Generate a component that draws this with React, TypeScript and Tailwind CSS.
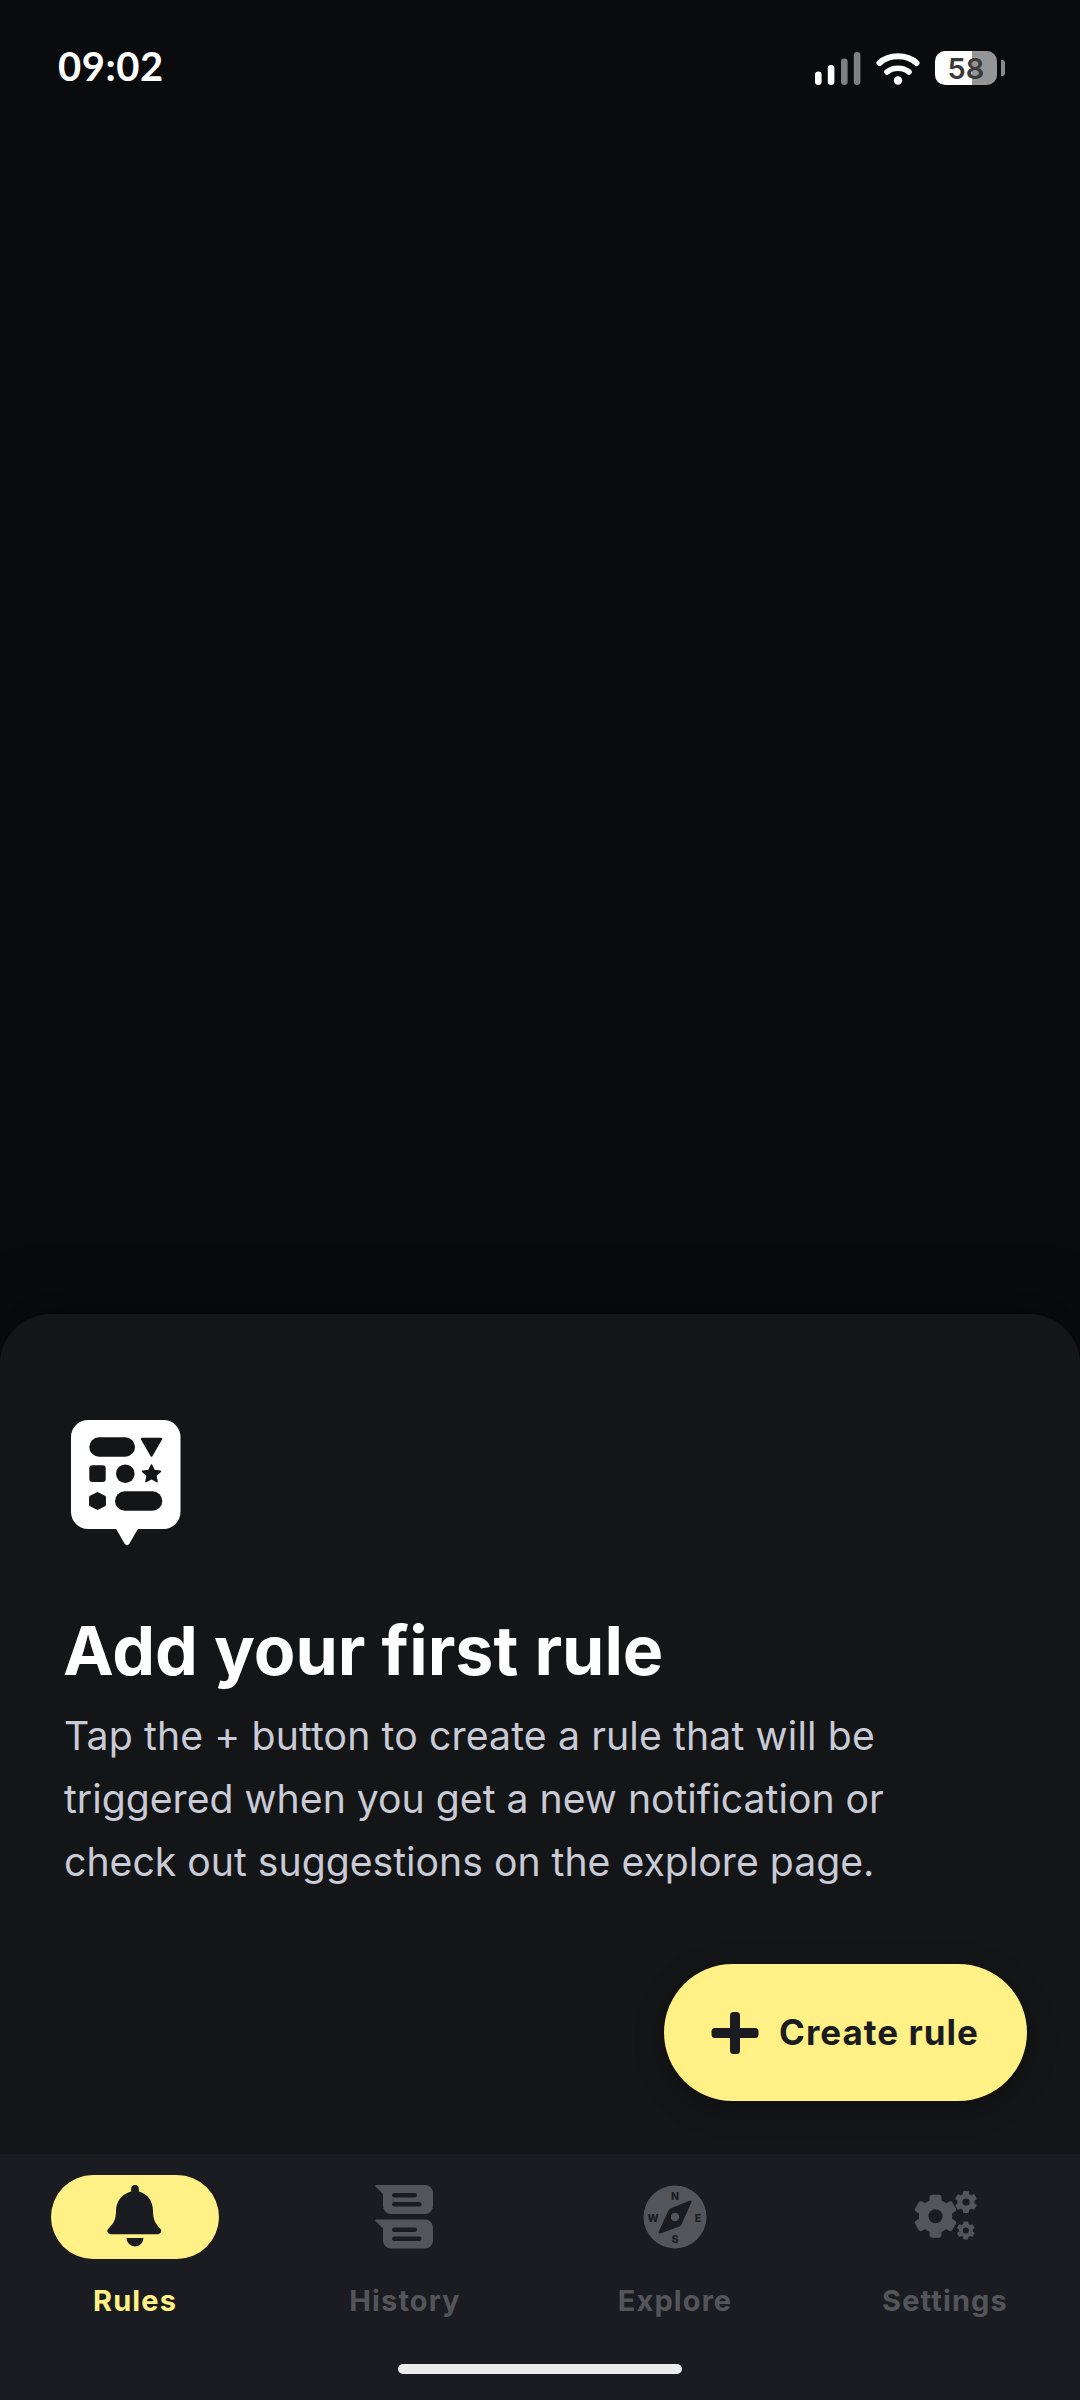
const GRAY = "#54555a";
const NAV = "#1b1c21";

function Gear({ cx, cy, r, hole, fill, bg }: { cx: number; cy: number; r: number; hole: number; fill: string; bg: string }) {
  const tw = r * 0.55;
  const teeth = [0, 60, 120, 180, 240, 300];
  return (
    <g>
      <circle cx={cx} cy={cy} r={r * 0.78} fill={fill} />
      {teeth.map((a) => (
        <rect key={a} x={cx - tw / 2} y={cy - r} width={tw} height={r * 0.5} rx={r * 0.12} fill={fill} transform={`rotate(${a} ${cx} ${cy})`} />
      ))}
      <circle cx={cx} cy={cy} r={hole} fill={bg} />
    </g>
  );
}

function RulesIcon() {
  const h = "#141517";
  return (
    <svg width="124" height="128" viewBox="-7 0 124 128" className="block">
      <rect width="109.5" height="109" rx="17" fill="#fff" />
      <path d="M44 107 L68 107 L58.5 123.5 Q56 127 53.5 123.5 Z" fill="#fff" />
      <rect x="18.3" y="17.3" width="45.7" height="19.4" rx="9.7" fill={h} />
      <path d="M71 19 H90 L80.5 35.5 Z" fill={h} stroke={h} strokeWidth="2.4" strokeLinejoin="round" />
      <rect x="18.3" y="45.3" width="16.4" height="16.7" rx="3" fill={h} />
      <circle cx="54.3" cy="53.7" r="9.3" fill={h} />
      <path d="M80.5 45 L83.2 50.6 L89.4 51.3 L84.8 55.5 L86 61.6 L80.5 58.6 L75 61.6 L76.2 55.5 L71.6 51.3 L77.8 50.6 Z" fill={h} stroke={h} strokeWidth="1.6" strokeLinejoin="round" />
      <path d="M26.5 72.5 L34.4 76.5 V85.5 L26.5 89.5 L18.6 85.5 V76.5 Z" fill={h} stroke={h} strokeWidth="1" strokeLinejoin="round" />
      <rect x="44" y="71.3" width="47.3" height="19.4" rx="9.7" fill={h} />
    </svg>
  );
}

function BellIcon() {
  return (
    <svg width="80" height="84" viewBox="0 0 80 84" className="relative block">
      <path
        d="M40 10 a3.8 3.8 0 0 1 3.8 3.8 V16.5 C52 18.5 58 25.5 58 36 C58 44 60 48 65 53.5 a3.2 3.2 0 0 1 -2 5.7 H15.5 a3.2 3.2 0 0 1 -2 -5.7 C19 48 21 44 21 36 C21 25.5 28 18.5 36.2 16.5 V13.8 A3.8 3.8 0 0 1 40 10 Z"
        fill={NAV}
      />
      <path d="M31.5 63 H48.5 A8.5 8.5 0 0 1 31.5 63 Z" fill={NAV} />
    </svg>
  );
}

function HistoryIcon() {
  const bubble = (dy: number) => (
    <g transform={`translate(0 ${dy})`}>
      <path d="M1 0 H50 a8 8 0 0 1 8 8 V21 a8 8 0 0 1 -8 8 H16 a8 8 0 0 1 -8 -8 V9 L0 1 Q0 0 1 0 Z" fill={GRAY} />
      <rect x="17" y="8" width="25" height="4.6" rx="2.3" fill={NAV} />
      <rect x="17" y="17" width="29.5" height="4.6" rx="2.3" fill={NAV} />
    </g>
  );
  return (
    <svg width="60" height="64" viewBox="0 0 60 64" className="block">
      {bubble(0)}
      {bubble(34.5)}
    </svg>
  );
}

function ExploreIcon() {
  const t = { fill: NAV, fontFamily: "Inter, sans-serif", fontWeight: 800, fontSize: 10.5, textAnchor: "middle" as const };
  return (
    <svg width="64" height="64" viewBox="-32 -32 64 64" className="block">
      <circle r="31.5" fill={GRAY} />
      <path d="M15 -16 Q16.5 -16.5 16 -15 L6 7.5 Q5.6 8.5 4.5 9 L-15 16 Q-16.5 16.5 -16 15 L-6 -6.5 Q-5.5 -7.5 -4.5 -8 Z" fill={NAV} stroke={NAV} strokeWidth="1" strokeLinejoin="round" />
      <circle r="4.2" fill={GRAY} />
      <text x="0" y="-17" {...t}>N</text>
      <text x="0" y="26" {...t}>S</text>
      <text x="23" y="4.5" {...t}>E</text>
      <text x="-22" y="4.5" {...t}>W</text>
    </svg>
  );
}

function SettingsIcon() {
  return (
    <svg width="64" height="64" viewBox="912 2185 64 64" className="block">
      <Gear cx={934.5} cy={2216.2} r={21.5} hole={7} fill={GRAY} bg={NAV} />
      <Gear cx={965} cy={2202} r={11} hole={3.6} fill={GRAY} bg={NAV} />
      <Gear cx={964.8} cy={2230.5} r={9} hole={3} fill={GRAY} bg={NAV} />
    </svg>
  );
}

function Signal() {
  return (
    <svg width="46" height="33" viewBox="0 0 46 33" className="block">
      <rect x="0" y="19.5" width="6.6" height="13.5" rx="3.3" fill="#fff" />
      <rect x="12.8" y="13" width="6.6" height="20" rx="3.3" fill="#fff" />
      <rect x="26" y="6.5" width="6.6" height="26.5" rx="3.3" fill="#808080" />
      <rect x="38.8" y="0" width="6.6" height="33" rx="3.3" fill="#808080" />
    </svg>
  );
}

function Wifi() {
  return (
    <svg width="44" height="33" viewBox="0 0 44 33" className="block">
      <path d="M3.5 11 C13 2 31 2 40.5 11" fill="none" stroke="#fff" strokeWidth="6" strokeLinecap="round" />
      <path d="M11 20 C17 15 27 15 33 20" fill="none" stroke="#fff" strokeWidth="5.6" strokeLinecap="round" />
      <circle cx="22" cy="28.5" r="4.2" fill="#fff" />
    </svg>
  );
}

function Tab({ label, active, children }: { label: string; active?: boolean; children: React.ReactNode }) {
  return (
    <div className="flex flex-col items-center">
      <div className={`flex h-[84px] w-[168px] items-center justify-center rounded-full ${active ? "bg-[#fff185]" : ""}`}>
        {children}
      </div>
      <span className={`mt-[24px] text-[29px] leading-[35px] font-bold tracking-[1.1px] ${active ? "text-[#fff185]" : "text-[#54555a]"}`}>
        {label}
      </span>
    </div>
  );
}

export default function App() {
  return (
    <div className="flex h-[2400px] w-[1080px] flex-col overflow-hidden bg-[#0a0b0d] font-['Inter',sans-serif]">
      <div className="flex h-[136px] items-center justify-between pr-[75px] pl-[58px]">
        <span className="-mt-[4px] font-['Lato',sans-serif] text-[40px] leading-none font-bold tracking-[0.5px] text-white">09:02</span>
        <div className="flex items-center">
          <Signal />
          <div className="ml-[15px]"><Wifi /></div>
          <div className="ml-[15px] flex h-[34px] w-[62px] items-center justify-center rounded-[10px] bg-[linear-gradient(90deg,#ffffff_60%,#959595_60%)] text-[29px] leading-none font-semibold text-[#3a3a3a]">
            58
          </div>
          <div className="ml-[4px] h-[16px] w-[4px] rounded-r-[3px] bg-[#8a8a8a]" />
        </div>
      </div>

      <div className="flex-1" />

      <div className="flex h-[840px] flex-col rounded-t-[50px] bg-[#141517] pt-[106px] pl-[64px] shadow-[0_0_60px_rgba(0,0,0,0.5)]">
        <RulesIcon />
        <h1 className="mt-[61px] -ml-[1px] text-[68px] leading-[82px] font-bold text-white">Add your first rule</h1>
        <p className="mt-[13px] text-[39.2px] leading-[63px] font-normal text-[#c8cad6]">
          <span className="tracking-[0.13px]">Tap the + button to create a rule that will be</span>
          <br />
          triggered when you get a new notification or
          <br />
          check out suggestions on the explore page.
        </p>
        <div className="mt-[71px] flex justify-end pr-[53px]">
          <div className="flex h-[137px] w-[363px] items-center rounded-full bg-[#fff185] pl-[47px] shadow-[0_8px_30px_rgba(0,0,0,0.25)]">
            <svg width="48" height="42" viewBox="0 0 48 42" className="block">
              <rect x="0.5" y="16" width="47" height="10" rx="3.5" fill={NAV} />
              <rect x="19" y="0" width="10" height="42" rx="3.5" fill={NAV} />
            </svg>
            <span className="ml-[20px] text-[35px] leading-none font-bold tracking-[1px] text-[#1b1c21]">Create rule</span>
          </div>
        </div>
      </div>

      <div className="relative h-[246px] bg-[#1b1c21] pt-[21px]">
        <div className="grid grid-cols-4">
          <Tab label="Rules" active><BellIcon /></Tab>
          <Tab label="History"><HistoryIcon /></Tab>
          <Tab label="Explore"><ExploreIcon /></Tab>
          <Tab label="Settings"><SettingsIcon /></Tab>
        </div>
        <div className="absolute top-[210px] left-[398px] h-[10px] w-[284px] rounded-full bg-[#ececec]" />
      </div>
    </div>
  );
}
